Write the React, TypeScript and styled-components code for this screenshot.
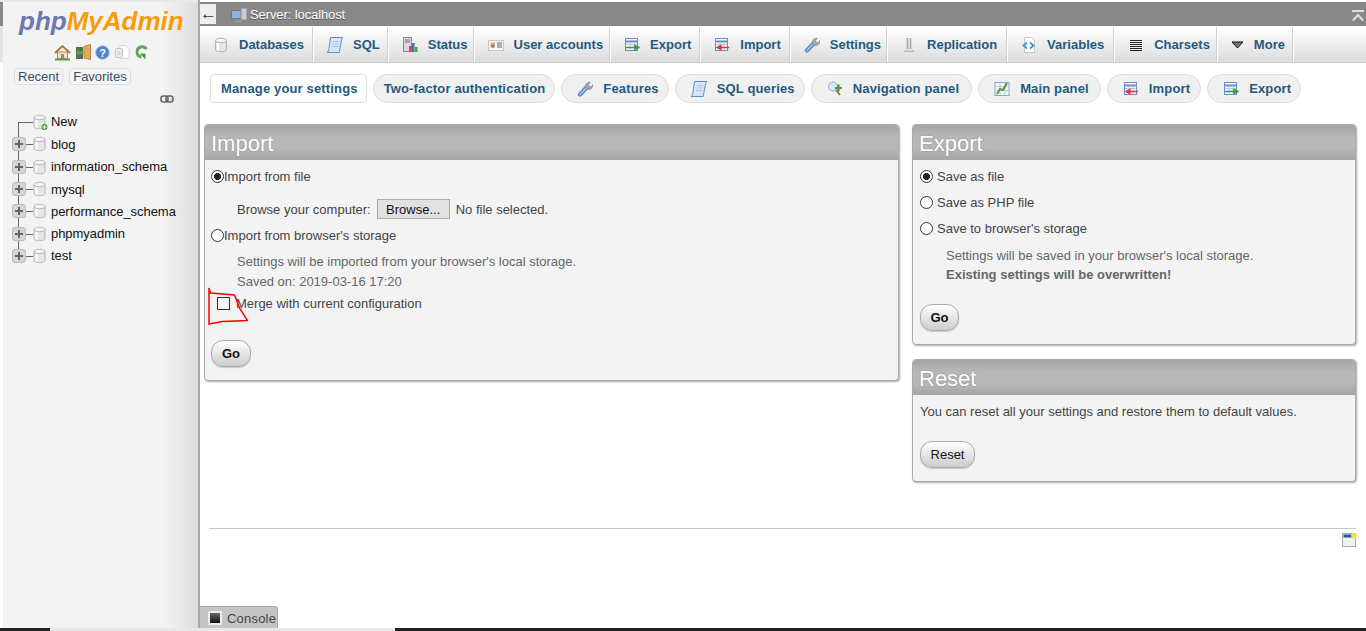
import React from 'react';
import styled, { createGlobalStyle } from 'styled-components';

const GlobalStyle = createGlobalStyle`
	html, body { margin: 0; padding: 0; height: 100%; overflow: hidden; background: #fff; }
	body { font-family: "Liberation Sans", Arial, sans-serif; font-size: 13px; color: #444; }
`;

type IconName = 'db' | 'dbNew' | 'sql' | 'status' | 'users' | 'export' | 'import' | 'wrench' | 'replication' | 'variables' | 'charsets' | 'more' | 'nav' | 'main';

function Db() {
	return (
		<>
			<path d="M2.5 3.5v9c0 1.3 2.4 2.3 5.5 2.3s5.5-1 5.5-2.3v-9z" fill="#e6e6e6" stroke="#b5b5b5" />
			<path d="M5 5.5v8" stroke="#fff" strokeWidth="2" />
			<ellipse cx="8" cy="3.5" rx="5.5" ry="2.2" fill="#f6f6f6" stroke="#b5b5b5" />
		</>
	);
}

function TableIcon({ arrow }: { arrow: 'in' | 'out' }) {
	return (
		<>
			<rect x="1.5" y="1.5" width="12" height="12" fill="#f4f7fc" stroke="#6c8fc7" />
			<path d="M2 4.5h11" stroke="#6c8fc7" strokeWidth="2" />
			<path d="M2 7.5h11M2 10.5h11M6 5v8M10 5v8" stroke="#b7c9e4" />
			{arrow === 'out'
				? <path d="M2 10.5h11M11 8.5l4 2-4 2z" fill="#3f9a35" stroke="#3f9a35" strokeWidth="1.4" />
				: <path d="M15 10.5H5M7 8.5l-4 2 4 2z" fill="#e33" stroke="#e33" strokeWidth="1.4" />}
		</>
	);
}

function TabIcon({ name }: { name: IconName }) {
	return (
		<IconSvg viewBox="0 0 16 16">
			{name === 'db' && <Db />}
			{name === 'sql' && (
				<>
					<path d="M3.500 .5H16c-1.500 1-1.500 3-2 5.500l-1.800 9.500H0c1.400-.6 1.700-2 2-4z" fill="#d6e6f7" stroke="#5d8fc9" />
					<path d="M6 4.500h6M5.500 7h6M5 9.500h6" stroke="#a9c6e6" />
				</>
			)}
			{name === 'status' && (
				<>
					<rect x="1.5" y="0.5" width="8" height="14" fill="#d8d8d8" stroke="#8a8a8a" />
					<path d="M3 3h5M3 5h5" stroke="#777" />
					<rect x="7" y="9" width="2.6" height="6" fill="#d43" />
					<rect x="10" y="6" width="2.6" height="9" fill="#47a" />
					<rect x="13" y="10" width="2.6" height="5" fill="#4a4" />
				</>
			)}
			{name === 'users' && (
				<>
					<rect x="0.5" y="3.5" width="15" height="10" fill="#f5f5f5" stroke="#c9c9c9" />
					<rect x="2.5" y="5.5" width="4.5" height="5" fill="#e9a860" />
					<rect x="3.5" y="8" width="2.5" height="2.5" fill="#4a7fc0" />
					<path d="M9 6h5M9 8h5M9 10h5" stroke="#667" />
				</>
			)}
			{name === 'export' && <TableIcon arrow="out" />}
			{name === 'import' && <TableIcon arrow="in" />}
			{name === 'wrench' && (
				<>
					<path d="M3 13.500 10 6" stroke="#5d8ad0" strokeWidth="4.400" strokeLinecap="round" />
					<path d="M3 13.500 9 7" stroke="#a9c6ee" strokeWidth="1.400" strokeLinecap="round" />
					<path d="M8 5.500C8.300 2.500 11 .8 13.500 1.300L11.300 3.600l1 2 2.500.2 .9-2.400c.4 3-1.600 5.400-4.800 5.200z" fill="#a5a5a5" stroke="#808080" strokeWidth=".6" />
				</>
			)}
			{name === 'replication' && (
				<>
					<path d="M6.500 1v11M9.500 1v11" stroke="#a5a5a5" strokeWidth="1.600" />
					<path d="M8 3v9" stroke="#ddd" />
					<path d="M3 13.500h10v1.500H3z" fill="#b5b5b5" />
				</>
			)}
			{name === 'variables' && (
				<>
					<path d="M3.500 .5h7l3 3v12h-10z" fill="#fff" stroke="#c9c9c9" />
					<path d="M6 5.500 2.500 8.500l3.500 3M9 5.500l3.500 3-3.500 3" fill="none" stroke="#3f8fdc" strokeWidth="1.800" />
				</>
			)}
			{name === 'charsets' && <path d="M2 3.500h12M2 5.500h12M2 7.500h12M2 9.500h12M2 11.500h12M2 13.500h12" stroke="#222" />}
			{name === 'more' && <path d="M4 5h11l-5.500 6z" fill="#777" stroke="#111" />}
			{name === 'nav' && (
				<>
					<circle cx="6" cy="5.500" r="4.500" fill="#d6e8f8" stroke="#8fb0d0" />
					<path d="M9 9l4 5" stroke="#a5763a" strokeWidth="2" />
					<path d="M11.500 3.500v7M8 7h7" stroke="#4a9a35" strokeWidth="2.200" />
				</>
			)}
			{name === 'main' && (
				<>
					<rect x="1" y="1.500" width="14" height="13" fill="#f4f7fc" stroke="#8aa5cf" />
					<path d="M6 2v12M11 2v12M1 5.500h14M1 9.500h14" stroke="#b7c9e4" />
					<path d="M3 13l3-5 3 1 4-7" fill="none" stroke="#5a9a35" strokeWidth="2" />
				</>
			)}
		</IconSvg>
	);
}

// widths differ a little from tab to tab, the original icons are not all the same size
const tabs: { label: string; icon: IconName; active?: boolean; left?: number; right?: number }[] = [
	{ label: 'Databases', icon: 'db' },
	{ label: 'SQL', icon: 'sql', right: 8 },
	{ label: 'Status', icon: 'status', right: 6 },
	{ label: 'User accounts', icon: 'users', right: 7 },
	{ label: 'Export', icon: 'export' },
	{ label: 'Import', icon: 'import' },
	{ label: 'Settings', icon: 'wrench', right: 6 },
	{ label: 'Replication', icon: 'replication', right: 10 },
	{ label: 'Variables', icon: 'variables', right: 10 },
	{ label: 'Charsets', icon: 'charsets', right: 7 },
	{ label: 'More', icon: 'more', left: 10, right: 8 },
];

const subTabs: { label: string; icon?: IconName; active?: boolean; right?: number }[] = [
	{ label: 'Manage your settings', active: true, right: 8 },
	{ label: 'Two-factor authentication', right: 9 },
	{ label: 'Features', icon: 'wrench', right: 9 },
	{ label: 'SQL queries', icon: 'sql', right: 9 },
	{ label: 'Navigation panel', icon: 'nav', right: 12 },
	{ label: 'Main panel', icon: 'main', right: 11 },
	{ label: 'Import', icon: 'import' },
	{ label: 'Export', icon: 'export', right: 9 },
];

const databases = ['blog', 'information_schema', 'mysql', 'performance_schema', 'phpmyadmin', 'test'];

export default function App() {
	return (
		<Page>
			<GlobalStyle />
			<Columns>
				<EdgeStrip />
				<Sidebar>
					<Logo><LogoPhp>php</LogoPhp>MyAdmin</Logo>
					<QuickIcons>
						<svg width="17" height="17" viewBox="0 0 17 17">
							<path d="M3.500 8v6.500h10V8z" fill="#efe3cf" stroke="#a98a5a" />
							<rect x="7" y="10" width="3" height="4.500" fill="#8a8a8a" />
							<path d="M1 9l7.500-7L16 9" fill="none" stroke="#b5753a" strokeWidth="2" />
							<path d="M1 15.500h15" stroke="#5aa040" strokeWidth="2" />
						</svg>
						<svg width="16" height="16" viewBox="0 0 16 16">
							<rect x="1" y="3" width="7" height="12" fill="#5a6a5a" />
							<path d="M9 2.500 15.500 .5v15L9 14z" fill="#e0aa60" stroke="#b5854a" />
							<path d="M0.500 8.500 4 5v2h4.500v3H4v2z" fill="#4fa83f" />
						</svg>
						<svg width="15" height="15" viewBox="0 0 15 15">
							<circle cx="7.500" cy="7.500" r="6.800" fill="#4f80c8" stroke="#a9c2e6" />
							<text x="7.500" y="11.500" textAnchor="middle" fontSize="11" fontWeight="700" fill="#fff" fontFamily="Liberation Sans">?</text>
						</svg>
						<svg width="16" height="16" viewBox="0 0 16 16">
							<path d="M6 1.500h6l3 3v10H6z" fill="#fff" stroke="#d5d5d5" />
							<rect x="1.500" y="4.500" width="7" height="9" rx="1.500" fill="#f2f2f2" stroke="#c5c5c5" />
							<path d="M4 6.500v5M6 6.500v5" stroke="#c5c5c5" />
						</svg>
						<svg width="15" height="16" viewBox="0 0 15 16">
							<path d="M12.500 5A5.200 5.200 0 1 0 7.500 13" fill="none" stroke="#5aa85a" strokeWidth="3" />
							<path d="M6 9.500l5.500 0 0 6z" fill="#4a9a4a" />
						</svg>
					</QuickIcons>
					<RecentRow>
						<PanelButton>Recent</PanelButton>
						<PanelButton>Favorites</PanelButton>
					</RecentRow>
					<LinkRow>
						<svg width="14" height="8" viewBox="0 0 14 8">
							<rect x="1" y="1" width="7" height="6" rx="2.500" fill="none" stroke="#666" strokeWidth="1.600" />
							<rect x="6" y="1" width="7" height="6" rx="2.500" fill="none" stroke="#666" strokeWidth="1.600" />
						</svg>
					</LinkRow>
					<Tree>
						<TreeRow $new>
							<ExpanderSlot />
							<DbIcon viewBox="2 0 12 16">
								<Db />
								<circle cx="13" cy="13" r="3" fill="#4a9a35" />
								<path d="M13 11v4M11 13h4" stroke="#fff" />
							</DbIcon>
							<TreeName>New</TreeName>
						</TreeRow>
						{databases.map((name, i) => (
							<TreeRow key={name} $last={i === databases.length - 1}>
								<ExpanderSlot><Expander /></ExpanderSlot>
								<DbIcon viewBox="2 0 12 16"><Db /></DbIcon>
								<TreeName>{name}</TreeName>
							</TreeRow>
						))}
					</Tree>
				</Sidebar>
				<Main>
					<TopBar>
						<BackButton>←</BackButton>
						<ServerCrumb>
							<svg width="17" height="16" viewBox="0 0 17 16">
								<rect x="0.500" y="3.500" width="11" height="8" fill="#8fb2dc" stroke="#777" />
								<rect x="10" y="1" width="6" height="12" fill="#ccc" stroke="#888" />
								<path d="M4 14.500h6" stroke="#999" strokeWidth="2" />
							</svg>
							Server: localhost
						</ServerCrumb>
						<CollapseArrow viewBox="0 0 12 12">
							<path d="M0 1h12" stroke="#ddd" strokeWidth="2" />
							<path d="M1 10.500 6 5l5 5.500" fill="none" stroke="#ddd" strokeWidth="2.200" />
						</CollapseArrow>
					</TopBar>
					<TabBar>
						{tabs.map((t) => (
							<Tab key={t.label} $active={t.active} $left={t.left} $right={t.right}>
								<TabIcon name={t.icon} />
								{t.label}
							</Tab>
						))}
					</TabBar>
					<SubTabBar>
						{subTabs.map((t) => (
							<SubTab key={t.label} $active={t.active} $hasIcon={!!t.icon} $right={t.right}>
								{t.icon && <TabIcon name={t.icon} />}
								{t.label}
							</SubTab>
						))}
					</SubTabBar>
					<Forms>
						<Panel>
							<PanelTitle>Import</PanelTitle>
							<PanelBody>
								<Line>
									<Radio type="radio" readOnly checked />
									Import from file
								</Line>
								<BrowseLine>
									Browse your computer:
									<BrowseButton>Browse...</BrowseButton>
									No file selected.
								</BrowseLine>
								<Line $mt={6}>
									<Radio type="radio" readOnly />
									Import from browser's storage
								</Line>
								<Note $mt={7} $indent={26}>Settings will be imported from your browser's local storage.</Note>
								<Note $indent={26}>Saved on: 2019-03-16 17:20</Note>
								<MergeLine>
									<CheckBox type="checkbox" readOnly />
									Merge with current configuration
									<RedMark width="42" height="38" viewBox="0 0 42 38">
										<path d="M3 1l1.500 5 24 2 5 13 8 12.500-25 1L3 37z" fill="none" stroke="#f00" strokeWidth="1.500" />
									</RedMark>
								</MergeLine>
								<GoButton $mt={27} $width={40}>Go</GoButton>
							</PanelBody>
						</Panel>
						<SideStack>
							<Panel>
								<PanelTitle>Export</PanelTitle>
								<PanelBody $wide>
									<Line>
										<Radio type="radio" readOnly checked $gap />
										Save as file
									</Line>
									<Line $mt={6}>
										<Radio type="radio" readOnly $gap />
										Save as PHP file
									</Line>
									<Line $mt={6}>
										<Radio type="radio" readOnly $gap />
										Save to browser's storage
									</Line>
									<Note $mt={8} $indent={26}>Settings will be saved in your browser's local storage.</Note>
									<Note $mt={-1} $indent={26} $bold>Existing settings will be overwritten!</Note>
									<GoButton $mt={20} $width={39}>Go</GoButton>
								</PanelBody>
							</Panel>
							<Panel>
								<PanelTitle>Reset</PanelTitle>
								<PanelBody $wide>
									<Line>You can reset all your settings and restore them to default values.</Line>
									<GoButton $mt={20} $width={55} $light>Reset</GoButton>
								</PanelBody>
							</Panel>
						</SideStack>
					</Forms>
					<Rule />
					<PageNote>
						<svg width="15" height="15" viewBox="0 0 15 15">
							<rect x="0.500" y="1.500" width="13" height="13" fill="#f2f2f2" stroke="#aaa" />
							<rect x="1.500" y="2.500" width="11" height="3" fill="#2a5aa8" />
							<circle cx="12" cy="3.500" r="2.800" fill="#f5e642" />
						</svg>
					</PageNote>
					<ConsoleTab>
						<ConsoleIcon />
						Console
					</ConsoleTab>
				</Main>
			</Columns>
			<BottomEdge>
				<BottomDark $width={50} />
				<BottomLight />
				<BottomDark />
			</BottomEdge>
		</Page>
	);
}

const Page = styled.div`
	width: 1366px;
	height: 631px;
	display: flex;
	flex-direction: column;
	overflow: hidden;
`;

const Columns = styled.div`
	flex: 1;
	min-height: 0;
	display: flex;
`;

const EdgeStrip = styled.div`
	width: 3px;
	background: linear-gradient(#e8e8e8 0 2px, #888 2px 26px, #e4e4e4 26px 62px, #fff 62px);
`;

const Sidebar = styled.div`
	width: 195px;
	padding-top: 5px;
	box-sizing: border-box;
	background: linear-gradient(to right, #f3f3f3 82%, #dcdddd);
	border-top: 2px solid #e8e8e8;
	display: flex;
	flex-direction: column;
`;

const Logo = styled.div`
	padding-left: 16px;
	height: 28px;
	line-height: 28px;
	font-size: 26px;
	font-weight: 700;
	font-style: italic;
	color: #f89c0e;
	white-space: nowrap;
`;

const LogoPhp = styled.span`
	color: #6c78af;
`;

const QuickIcons = styled.div`
	height: 18px;
	margin-top: 8px;
	padding-left: 51px;
	display: flex;
	align-items: center;
	gap: 4px;
`;

const RecentRow = styled.div`
	margin-top: 7px;
	padding-left: 11px;
	display: flex;
	gap: 6px;
`;

const PanelButton = styled.div`
	height: 15px;
	line-height: 15px;
	padding: 0 3px;
	border: 1px solid #ddd;
	border-radius: 4px;
	background: #f5f5f5;
	color: #3a5068;
	font-size: 13px;
`;

const LinkRow = styled.div`
	height: 8px;
	margin-top: 10px;
	padding-left: 157px;
	display: flex;
	line-height: 0;
`;

const Tree = styled.div`
	margin-top: 7px;
	display: flex;
	flex-direction: column;
`;

const TreeRow = styled.div<{ $new?: boolean; $last?: boolean }>`
	position: relative;
	height: ${(p) => (p.$new ? '23.3px' : '22.3px')};
	padding-left: 9px;
	display: flex;
	align-items: center;
	color: #111;

	&::before {
		content: '';
		position: absolute;
		left: 15px;
		top: ${(p) => (p.$new ? '50%' : '0')};
		bottom: ${(p) => (p.$last ? '50%' : '0')};
		border-left: 1px solid #666;
	}

	&::after {
		content: '';
		position: absolute;
		left: 15px;
		width: 15px;
		top: 50%;
		border-top: 1px solid #666;
	}
`;

const ExpanderSlot = styled.div`
	width: 21px;
	height: 14px;
	flex: none;
`;

const Expander = styled.div`
	position: relative;
	z-index: 1;
	width: 14px;
	height: 14px;
	box-sizing: border-box;
	border: 1px solid #bbb;
	border-radius: 3px;
	background:
		linear-gradient(#666, #666) center / 8px 2px no-repeat,
		linear-gradient(#666, #666) center / 2px 8px no-repeat,
		#d5d5d5;
`;

const DbIcon = styled.svg`
	position: relative;
	z-index: 1;
	width: 13px;
	height: 16px;
	flex: none;
	overflow: visible;
`;

const TreeName = styled.span`
	margin-left: 5px;
	letter-spacing: -0.05px;
`;

const Main = styled.div`
	flex: 1;
	min-width: 0;
	border-left: 2px solid #a8a8a8;
	display: flex;
	flex-direction: column;
	background: #fff;
`;

const TopBar = styled.div`
	height: 24px;
	margin-top: 2px;
	background: #888;
	display: flex;
	align-items: center;
`;

const BackButton = styled.div`
	width: 16px;
	height: 20px;
	background: #eee;
	color: #333;
	font-size: 17px;
	line-height: 20px;
	text-align: center;
`;

const ServerCrumb = styled.div`
	margin-left: 15px;
	padding-top: 1px;
	display: flex;
	align-items: center;
	gap: 2px;
	color: #fff;
	text-shadow: 0 1px 0 #555;
	font-size: 13px;
	letter-spacing: -0.1px;
`;

const CollapseArrow = styled.svg`
	width: 12px;
	height: 12px;
	margin: 3px 2px 0 auto;
`;

const TabBar = styled.div`
	height: 36px;
	margin-top: 1px;
	display: flex;
	background: linear-gradient(#fff, #dcdcdc);
	border-bottom: 1px solid #ccc;
	box-sizing: border-box;
`;

const IconSvg = styled.svg`
	width: 16px;
	height: 16px;
	flex: none;
	margin-right: 10px;
`;

const Tab = styled.div<{ $active?: boolean; $left?: number; $right?: number }>`
	height: ${(p) => (p.$active ? '36px' : '35px')};
	padding: 0 ${(p) => p.$right ?? 9}px 0 ${(p) => p.$left ?? 13}px;
	display: flex;
	align-items: center;
	box-sizing: border-box;
	border-right: 1px solid #fff;
	box-shadow: inset -1px 0 0 #d0d0d0;
	background: ${(p) => (p.$active ? '#fff' : 'transparent')};
	color: #235a81;
	font-weight: 700;
	font-size: 13px;
	white-space: nowrap;
`;

const SubTabBar = styled.div`
	margin: 11px 0 0 10px;
	display: flex;
	gap: 6px;
`;

const SubTab = styled.div<{ $active?: boolean; $hasIcon?: boolean; $right?: number }>`
	height: 29px;
	box-sizing: border-box;
	padding: 0 ${(p) => p.$right ?? 10}px 0 ${(p) => (p.$hasIcon ? '15px' : '10px')};
	display: flex;
	align-items: center;
	border: 1px solid #ddd;
	border-radius: ${(p) => (p.$active ? '4px' : '15px')};
	background: ${(p) => (p.$active ? '#fff' : '#f0f0f0')};
	color: #235a81;
	font-weight: 700;
	font-size: 13px;
	letter-spacing: 0.15px;
	white-space: nowrap;
`;

const Forms = styled.div`
	margin: 21px 10px 0 4px;
	display: grid;
	grid-template-columns: 695px 444px;
	column-gap: 13px;
	align-items: start;
`;

const SideStack = styled.div`
	display: flex;
	flex-direction: column;
	gap: 14px;
`;

const Panel = styled.div`
	border: 1px solid #aaa;
	border-radius: 4px;
	background: #f3f3f3;
	box-shadow: 1px 1px 2px #aaa;
	overflow: hidden;
`;

const PanelTitle = styled.div`
	height: 35px;
	line-height: 38px;
	padding-left: 6px;
	background: linear-gradient(#a5a5a5, #b8b8b8 35%, #b8b8b8 65%, #a5a5a5);
	color: #fff;
	font-size: 22px;
	text-shadow: 0 0 2px #888;
`;

const PanelBody = styled.div<{ $wide?: boolean }>`
	padding: 6px 7px 13px ${(p) => (p.$wide ? '7px' : '6px')};
	display: flex;
	flex-direction: column;
	align-items: flex-start;
`;

const Line = styled.div<{ $mt?: number }>`
	height: 20px;
	margin-top: ${(p) => p.$mt || 0}px;
	display: flex;
	align-items: center;
	color: #444;
`;

const BrowseLine = styled(Line)`
	margin: 13px 0 0 26px;
`;

const MergeLine = styled(Line)`
	position: relative;
	margin-top: 1px;
	padding-left: 6px;
`;

const Radio = styled.input<{ $gap?: boolean }>`
	appearance: none;
	width: 13px;
	height: 13px;
	margin: 0 ${(p) => (p.$gap ? '4px' : '0')} 0 0;
	flex: none;
	box-sizing: border-box;
	border: 1px solid #333;
	border-radius: 50%;
	background: #fff;

	&:checked {
		background: radial-gradient(circle, #222 0 3.2px, #fff 3.8px);
	}
`;

const CheckBox = styled.input`
	appearance: none;
	width: 13px;
	height: 13px;
	margin: 0 6px 0 0;
	flex: none;
	box-sizing: border-box;
	border: 1px solid #333;
	background: #f6f6f6;
`;

const RedMark = styled.svg`
	position: absolute;
	left: -5px;
	top: -6px;
`;

const BrowseButton = styled.div`
	width: 73px;
	height: 20px;
	margin: 0 6px;
	box-sizing: border-box;
	border: 1px solid #adadad;
	background: #e1e1e1;
	color: #111;
	line-height: 19px;
	text-align: center;
`;

const Note = styled.div<{ $mt?: number; $indent?: number; $bold?: boolean }>`
	height: ${(p) => (p.$bold ? '19px' : '20px')};
	line-height: 20px;
	margin-top: ${(p) => p.$mt || 0}px;
	margin-left: ${(p) => p.$indent || 0}px;
	color: #666;
	font-weight: ${(p) => (p.$bold ? 700 : 400)};
`;

const GoButton = styled.div<{ $mt: number; $width: number; $light?: boolean }>`
	width: ${(p) => p.$width}px;
	height: 27px;
	margin-top: ${(p) => p.$mt}px;
	box-sizing: border-box;
	border: 1px solid #aaa;
	border-radius: 12px;
	background: linear-gradient(#fff, #ccc);
	box-shadow: 0 1px 1px #ccc;
	color: #111;
	font-weight: ${(p) => (p.$light ? 400 : 700)};
	line-height: 25px;
	text-align: center;
`;

const Rule = styled.div`
	height: 1px;
	margin: 46px 10px 0 9px;
	background: #c8c8c8;
`;

const PageNote = styled.div`
	margin: 3px 9px 0 0;
	display: flex;
	justify-content: flex-end;
	line-height: 0;
`;

const ConsoleTab = styled.div`
	margin-top: auto;
	width: 78px;
	height: 22px;
	padding: 1px 0 0 8px;
	box-sizing: border-box;
	display: flex;
	align-items: center;
	gap: 5px;
	background: #c4c4c4;
	border-top: 1px solid #aaa;
	border-right: 1px solid #aaa;
	border-top-right-radius: 3px;
	color: #444;
	font-size: 13px;
	letter-spacing: 0.2px;
`;

const ConsoleIcon = styled.div`
	width: 14px;
	height: 14px;
	box-sizing: border-box;
	border: 2px solid #eee;
	background: linear-gradient(#666, #111);
`;

const BottomEdge = styled.div`
	height: 3px;
	flex: none;
	display: flex;
`;

const BottomDark = styled.div<{ $width?: number }>`
	${(p) => (p.$width ? `width: ${p.$width}px;` : 'flex: 1;')}
	background: #222;
`;

const BottomLight = styled.div`
	width: 345px;
	background: #e8e8e8;
`;
